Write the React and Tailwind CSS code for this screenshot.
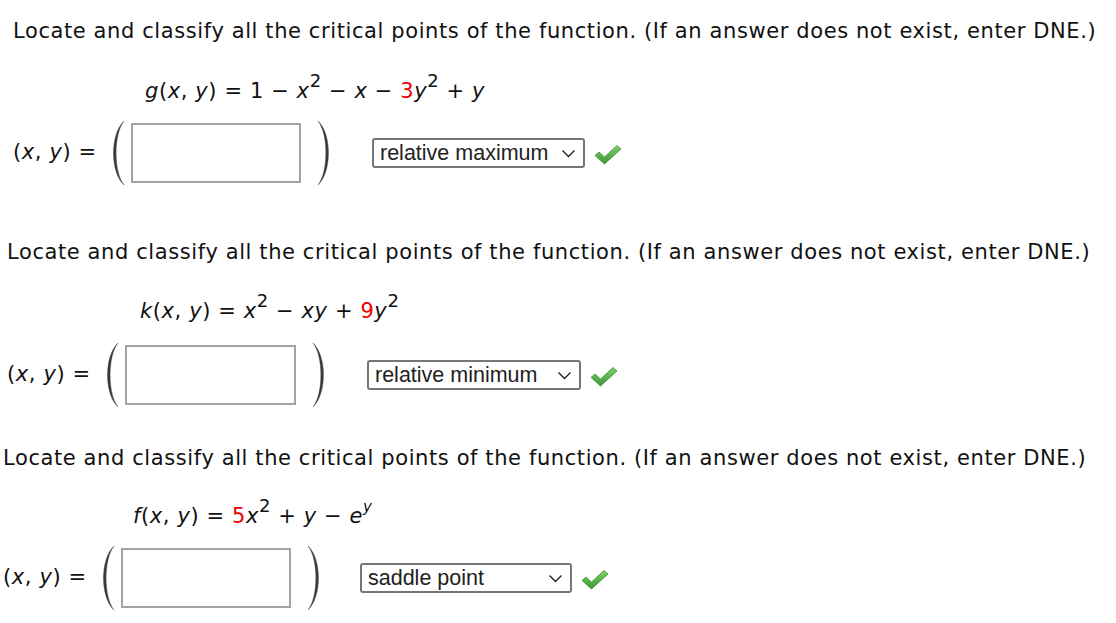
import React from 'react';

const V = ({ children }) => <i className="italic">{children}</i>;
const Red = ({ children }) => <span className="text-[#ee0000]">{children}</span>;
const Sup = ({ children }) => <sup className="relative -top-[3px] align-super text-[18px] leading-none">{children}</sup>;

const Paren = ({ flip }) => (
  <svg width="18" height="66" viewBox="0 0 18 66" className={flip ? 'scale-x-[-1]' : ''}>
    <path d="M16 1 C2 14 2 52 16 65 C5.5 52 5.5 14 16 1 Z" fill="#3a3a3a" stroke="#3a3a3a" strokeWidth="0.4" />
  </svg>
);

const Check = () => (
  <svg width="28" height="21" viewBox="0 0 28 21">
    <defs>
      <linearGradient id="chk" x1="0" y1="0" x2="0" y2="1">
        <stop offset="0" stopColor="#7fd06c" />
        <stop offset="1" stopColor="#3e9636" />
      </linearGradient>
    </defs>
    <path d="M1 11.5 L5 8 L10.5 13 L23 1.5 L27 5 L10.5 20 Z" fill="url(#chk)" stroke="#3c8f35" strokeWidth="0.8" strokeLinejoin="round" />
  </svg>
);

const Chevron = () => (
  <svg width="15" height="9" viewBox="0 0 15 9">
    <path d="M1.5 1.5 L7.5 7.5 L13.5 1.5" fill="none" stroke="#222" strokeWidth="1.4" />
  </svg>
);

const Question = ({ pad, eq, eqLeft, rowTop, inputW, selGap, selW, selLabel }) => (
  <div className={pad}>
    <p className="h-[24px] whitespace-nowrap leading-[24px]">
      Locate and classify all the critical points of the function. (If an answer does not exist, enter DNE.)
    </p>
    <div className={`${eqLeft} h-[24px] whitespace-nowrap leading-[24px]`}>{eq}</div>
    <div className={`flex h-[66px] items-center ${rowTop}`}>
      <div className="flex w-[118px] items-center justify-between">
        <span className="whitespace-pre">(<V>x</V>, <V>y</V>) =</span>
        <div className="pr-[5px]">
          <Paren />
        </div>
      </div>
      <div className={`h-[60px] ${inputW} border-2 border-[#a3a3a3] bg-white`} />
      <div className="ml-[15px]">
        <Paren flip />
      </div>
      <div className={selGap}>
        <div
          className={`flex h-[30px] ${selW} items-center justify-between whitespace-nowrap rounded-[3px] border-2 border-[#767676] bg-white pl-[6px] pr-[7px] font-['Liberation_Sans',Arial,sans-serif] text-[21.5px] tracking-normal text-[#222]`}
        >
          <span>{selLabel}</span>
          <Chevron />
        </div>
      </div>
      <div className="ml-[9px] mt-[2px]">
        <Check />
      </div>
    </div>
  </div>
);

export default function App() {
  return (
    <div className="h-[623px] w-[1116px] overflow-hidden bg-white font-['DejaVu_Sans',Verdana,sans-serif] text-[21px] tracking-[0.6px] text-[#111]">
      <Question
        pad="pl-[13px] pt-[19px]"
        eqLeft="ml-[132px] mt-[32px]"
        eq={
          <span>
            <V>g</V>(<V>x</V>, <V>y</V>) = 1 − <V>x</V><Sup>2</Sup> − <V>x</V> − <Red>3</Red><V>y</V><Sup>2</Sup> + <V>y</V>
          </span>
        }
        rowTop="mt-[21px]"
        inputW="w-[170px]"
        selGap="ml-[38px]"
        selW="w-[213px]"
        selLabel="relative maximum"
      />
      <Question
        pad="pl-[7px] pt-[54px]"
        eqLeft="ml-[133px] mt-[31px]"
        eq={
          <span>
            <V>k</V>(<V>x</V>, <V>y</V>) = <V>x</V><Sup>2</Sup> − <V>xy</V> + <Red>9</Red><V>y</V><Sup>2</Sup>
          </span>
        }
        rowTop="mt-[23px]"
        inputW="w-[171px]"
        selGap="ml-[38px]"
        selW="w-[214px]"
        selLabel="relative minimum"
      />
      <Question
        pad="pl-[3px] pt-[38px]"
        eqLeft="ml-[130px] mt-[30px]"
        eq={
          <span>
            <V>f</V>(<V>x</V>, <V>y</V>) = <Red>5</Red><V>x</V><Sup>2</Sup> + <V>y</V> − <V>e</V>
            <sup className="relative -top-[3px] align-super text-[15px] leading-none">
              <V>y</V>
            </sup>
          </span>
        }
        rowTop="mt-[21px]"
        inputW="w-[170px]"
        selGap="ml-[36px]"
        selW="w-[212px]"
        selLabel="saddle point"
      />
    </div>
  );
}
